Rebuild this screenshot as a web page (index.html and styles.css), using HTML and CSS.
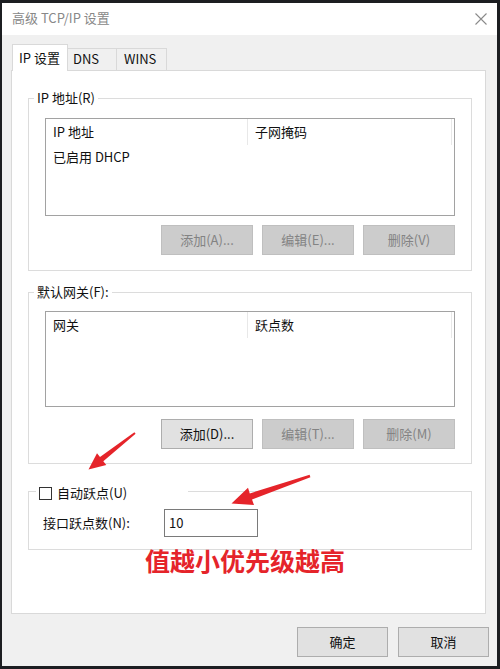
FILE: index.html
```html
<!DOCTYPE html>
<html lang="zh-CN">
<head>
<meta charset="utf-8">
<title>高级 TCP/IP 设置</title>
<link rel="stylesheet" href="styles.css">
</head>
<body>
<div class="window">
  <div class="titlebar">
    <span class="title">高级 TCP/IP 设置</span>
    <svg class="close" width="12" height="12" viewBox="0 0 12 12"><path d="M0.5 0.5 L11.5 11.5 M11.5 0.5 L0.5 11.5" stroke="#8a8a8a" stroke-width="1.1" fill="none"/></svg>
  </div>
  <div class="main">
    <div class="tabs">
      <div class="tab active">IP 设置</div>
      <div class="tab dns">DNS</div>
      <div class="tab wins">WINS</div>
    </div>
    <div class="panel">
      <div class="group g1">
        <span class="legend">IP 地址(R)</span>
        <div class="list l1">
          <div class="lhead">
            <div class="col c1">IP 地址</div>
            <div class="col c2">子网掩码</div>
            <div class="col c3"></div>
          </div>
          <div class="lrow">已启用 DHCP</div>
        </div>
        <div class="btnrow r1">
          <div class="btn disabled">添加(A)...</div>
          <div class="btn disabled">编辑(E)...</div>
          <div class="btn disabled">删除(V)</div>
        </div>
      </div>
      <div class="group g2">
        <span class="legend">默认网关(F):</span>
        <div class="list l2">
          <div class="lhead">
            <div class="col c1">网关</div>
            <div class="col c2">跃点数</div>
            <div class="col c3"></div>
          </div>
        </div>
        <div class="btnrow r2">
          <div class="btn">添加(D)...</div>
          <div class="btn disabled">编辑(T)...</div>
          <div class="btn disabled">删除(M)</div>
        </div>
      </div>
      <div class="group g3">
        <span class="legend chk"><span class="box"></span><span>自动跃点(U)</span></span>
        <div class="metric">
          <span class="mlabel">接口跃点数(N):</span>
          <div class="input">10</div>
        </div>
      </div>
    </div>
  </div>
  <div class="footer">
    <div class="btn">确定</div>
    <div class="btn">取消</div>
  </div>
  <div class="note">值越小优先级越高</div>
  <svg class="arrows" width="495" height="663" viewBox="2 3 495 663">
    <polygon fill="#e5242a" points="135.6,433.7 103.3,461.3 106.3,465.0 88.5,469.5 97.0,453.3 100.0,457.0 134.4,432.3"/>
    <polygon fill="#e5242a" points="310.4,477.2 252.0,499.6 254.0,505.0 231.5,503.5 248.0,487.8 249.8,493.4 309.6,474.8"/>
  </svg>
</div>
</body>
</html>
```
FILE: styles.css
```css
* { box-sizing: border-box; }
html, body { margin: 0; padding: 0; }
body {
  background: #1c1e21;
  width: 500px;
  height: 669px;
  overflow: hidden;
  font-family: "Noto Sans CJK SC", "Noto Sans", sans-serif;
  font-size: 13px;
  color: #111;
}
.window {
  position: relative;
  margin: 3px 3px 3px 2px;
  width: 495px;
  height: 663px;
  background: #f0f0f0;
  display: flex;
  flex-direction: column;
}
.titlebar {
  height: 32px;
  flex: none;
  background: #fff;
  display: flex;
  align-items: center;
  justify-content: space-between;
  padding: 0 10px 2px 10px;
}
.title { color: #888; font-size: 13px; line-height: 16px; }
.close { display: block; margin-top: 2px; }
.main {
  flex: none;
  padding: 9px 11px 0 9px;
  display: flex;
  flex-direction: column;
}
.tabs {
  display: flex;
  align-items: flex-end;
  height: 27px;
  margin-left: 1px;
  margin-bottom: -1px;
  position: relative;
  z-index: 1;
}
.tab {
  height: 22px;
  margin-bottom: 1px;
  border: 1px solid #d9d9d9;
  border-bottom: none;
  background: #f0f0f0;
  line-height: 20px;
  font-size: 13px;
}
.tab.active {
  width: 56px;
  height: 27px;
  margin-bottom: 0;
  background: #fff;
  padding-left: 6px;
  line-height: 26px;
}
.tab.dns { width: 49px; border-left: none; padding-left: 5px; }
.tab.wins { width: 50px; border-left: none; padding-left: 7px; }
.panel {
  height: 544px;
  border: 1px solid #d9d9d9;
  background: #fff;
  padding: 0 13px 0 16px;
}
.group {
  position: relative;
  border: 1px solid #dcdcdc;
}
.g1 { margin-top: 27px; padding: 19px 16px 15px; }
.g2 { margin-top: 21px; padding: 18px 16px 14px; }
.g3 { margin-top: 27px; padding: 17px 16px 12px 14px; }
.legend {
  position: absolute;
  top: -9px;
  left: 5px;
  background: #fff;
  padding: 0 3px;
  line-height: 16px;
  font-size: 13px;
  white-space: nowrap;
}
.legend.chk {
  top: -7px;
  left: 7px;
  width: 152px;
  display: flex;
  align-items: center;
}
.box {
  display: block;
  width: 13px;
  height: 13px;
  border: 1px solid #333;
  background: #fff;
  margin-right: 5px;
}
.list {
  border: 1px solid #a2a2a2;
  background: #fff;
}
.l1 { height: 98px; }
.l2 { height: 96px; }
.lhead {
  display: grid;
  grid-template-columns: 202px 204px 1fr;
  height: 26px;
}
.col {
  padding-left: 7px;
  line-height: 26px;
  border-right: 1px solid #e8e8e8;
}
.col.c3 { border-right: none; }
.lrow {
  height: 24px;
  line-height: 24px;
  padding-left: 7px;
}
.btnrow {
  display: flex;
  justify-content: flex-end;
  gap: 9px;
}
.r1 { margin-top: 9px; }
.r2 { margin-top: 12px; }
.btn {
  width: 92px;
  height: 30px;
  border: 1px solid #adadad;
  background: #e1e1e1;
  color: #111;
  display: flex;
  align-items: center;
  justify-content: center;
  font-size: 13px;
  line-height: 16px;
}
.btn.disabled {
  border-color: #bfbfbf;
  background: #cccccc;
  color: #838383;
}
.metric {
  display: flex;
  align-items: center;
}
.mlabel { width: 121px; line-height: 16px; }
.input {
  width: 94px;
  height: 28px;
  border: 1px solid #7a7a7a;
  background: #fff;
  padding-left: 4px;
  line-height: 26px;
}
.footer {
  flex: none;
  display: flex;
  justify-content: flex-end;
  gap: 10px;
  padding: 13px 8px 9px;
}
.footer .btn { width: 91px; }
.note {
  position: absolute;
  left: 143px;
  top: 543px;
  line-height: 28px;
  font-size: 25px;
  font-weight: 700;
  color: #e5242a;
  white-space: nowrap;
}
.arrows {
  position: absolute;
  left: 0;
  top: 0;
  pointer-events: none;
}
```
